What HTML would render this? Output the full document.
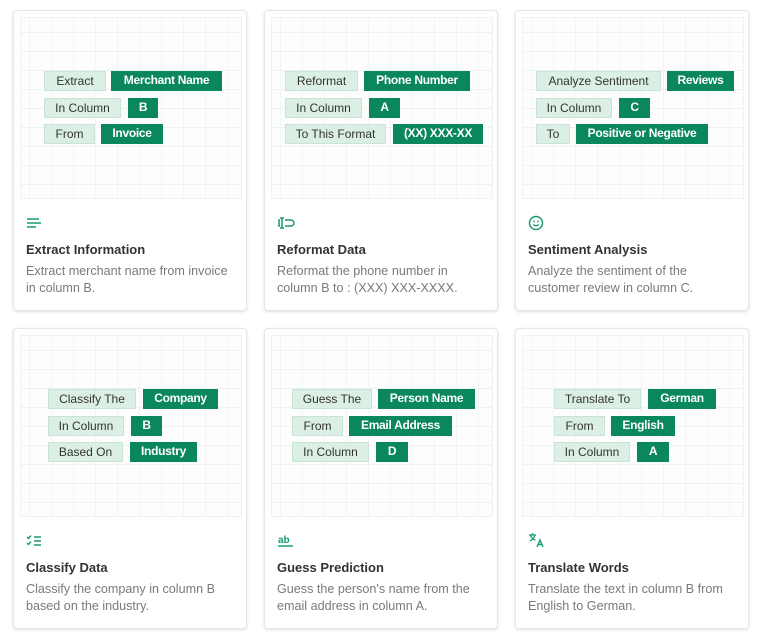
<!DOCTYPE html>
<html><head><meta charset="utf-8"><style>
*{box-sizing:border-box;margin:0;padding:0}
body{width:768px;height:644px;background:#fff;font-family:"Liberation Sans",sans-serif;position:relative;overflow:hidden}
.card{position:absolute;width:234px;height:301px;border:1px solid #e6e6e6;border-radius:4px;background:#fff;box-shadow:0 1px 3px rgba(0,0,0,.12)}
.grid{position:absolute;left:6px;top:6px;width:222px;height:182px;border:1px solid #edf3ef;
background-color:#fcfdfc;
background-image:linear-gradient(#edf4ef 1px,transparent 1px),linear-gradient(90deg,#f1f6f2 1px,transparent 1px);
background-size:22px 19px,22px 19px;background-position:0 14px,8px 0}
.t{position:absolute;height:20px;line-height:19px;font-size:12px;text-align:center;white-space:nowrap}
.l{background:#dcefe5;border:1px solid #c9e3d6;color:#333}
.g{background:#0b875c;color:#fff;font-weight:bold;letter-spacing:-.3px}
.ic{position:absolute;left:12px;top:204px}
.h{position:absolute;left:12px;top:231px;font-size:13px;font-weight:bold;color:#333}
.d{position:absolute;left:12px;top:252px;font-size:12.6px;line-height:17px;color:#7a7a7a;width:212px}
</style></head><body>

<div class="card" style="left:13px;top:10px"><div class="grid"></div>
<div class="t l" style="left:30px;top:60px;width:62px">Extract</div>
<div class="t g" style="left:97px;top:60px;width:111px">Merchant Name</div>
<div class="t l" style="left:30px;top:87px;width:77px">In Column</div>
<div class="t g" style="left:114px;top:87px;width:30px">B</div>
<div class="t l" style="left:30px;top:113px;width:51px">From</div>
<div class="t g" style="left:87px;top:113px;width:62px">Invoice</div>
<svg class="ic" width="16" height="16" viewBox="0 0 16 16"><path d="M1 4h12M1 8h14M1 12h9" stroke="#1a9a70" stroke-width="1.5" fill="none"/></svg>
<div class="h">Extract Information</div>
<div class="d">Extract merchant name from invoice in column B.</div></div>

<div class="card" style="left:264px;top:10px"><div class="grid"></div>
<div class="t l" style="left:20px;top:60px;width:73px">Reformat</div>
<div class="t g" style="left:99px;top:60px;width:106px">Phone Number</div>
<div class="t l" style="left:20px;top:87px;width:77px">In Column</div>
<div class="t g" style="left:104px;top:87px;width:31px">A</div>
<div class="t l" style="left:20px;top:113px;width:101px">To This Format</div>
<div class="t g" style="left:128px;top:113px;width:90px">(XX) XXX-XX</div>
<svg class="ic" width="18" height="16" viewBox="0 0 18 16"><path d="M3 3h4M3 13h4M5 3v10M8 5h6a3 3 0 0 1 0 6H8M3 5H2v6h1" stroke="#1a9a70" stroke-width="1.5" fill="none"/></svg>
<div class="h">Reformat Data</div>
<div class="d">Reformat the phone number in column B to : (XXX) XXX-XXXX.</div></div>

<div class="card" style="left:515px;top:10px"><div class="grid"></div>
<div class="t l" style="left:20px;top:60px;width:125px">Analyze Sentiment</div>
<div class="t g" style="left:151px;top:60px;width:67px">Reviews</div>
<div class="t l" style="left:20px;top:87px;width:76px">In Column</div>
<div class="t g" style="left:103px;top:87px;width:31px">C</div>
<div class="t l" style="left:20px;top:113px;width:34px">To</div>
<div class="t g" style="left:60px;top:113px;width:132px">Positive or Negative</div>
<svg class="ic" width="16" height="16" viewBox="0 0 16 16"><circle cx="8" cy="8" r="6.5" stroke="#1a9a70" stroke-width="1.5" fill="none"/><circle cx="6" cy="6.5" r=".9" fill="#1a9a70"/><circle cx="10" cy="6.5" r=".9" fill="#1a9a70"/><path d="M5.3 9.5q2.7 2.5 5.4 0" stroke="#1a9a70" stroke-width="1.3" fill="none"/></svg>
<div class="h">Sentiment Analysis</div>
<div class="d">Analyze the sentiment of the customer review in column C.</div></div>

<div class="card" style="left:13px;top:328px"><div class="grid"></div>
<div class="t l" style="left:34px;top:60px;width:88px">Classify The</div>
<div class="t g" style="left:129px;top:60px;width:75px">Company</div>
<div class="t l" style="left:34px;top:87px;width:76px">In Column</div>
<div class="t g" style="left:117px;top:87px;width:31px">B</div>
<div class="t l" style="left:34px;top:113px;width:75px">Based On</div>
<div class="t g" style="left:116px;top:113px;width:67px">Industry</div>
<svg class="ic" width="16" height="16" viewBox="0 0 16 16"><path d="M1 4l1.5 1.5L5 2.5M1 10l1.5 1.5L5 8.5M8 4h7M8 8h7M8 12h7" stroke="#1a9a70" stroke-width="1.4" fill="none"/></svg>
<div class="h">Classify Data</div>
<div class="d">Classify the company in column B based on the industry.</div></div>

<div class="card" style="left:264px;top:328px"><div class="grid"></div>
<div class="t l" style="left:27px;top:60px;width:80px">Guess The</div>
<div class="t g" style="left:113px;top:60px;width:97px">Person Name</div>
<div class="t l" style="left:27px;top:87px;width:51px">From</div>
<div class="t g" style="left:84px;top:87px;width:103px">Email Address</div>
<div class="t l" style="left:27px;top:113px;width:77px">In Column</div>
<div class="t g" style="left:111px;top:113px;width:32px">D</div>
<svg class="ic" width="18" height="16" viewBox="0 0 18 16"><text x="1" y="10" font-size="10" font-weight="bold" fill="#1a9a70" font-family="Liberation Sans">ab</text><path d="M1 13h15" stroke="#1a9a70" stroke-width="1.5"/></svg>
<div class="h">Guess Prediction</div>
<div class="d">Guess the person's name from the email address in column A.</div></div>

<div class="card" style="left:515px;top:328px"><div class="grid"></div>
<div class="t l" style="left:38px;top:60px;width:87px">Translate To</div>
<div class="t g" style="left:132px;top:60px;width:68px">German</div>
<div class="t l" style="left:38px;top:87px;width:51px">From</div>
<div class="t g" style="left:95px;top:87px;width:64px">English</div>
<div class="t l" style="left:38px;top:113px;width:76px">In Column</div>
<div class="t g" style="left:121px;top:113px;width:32px">A</div>
<svg class="ic" width="18" height="18" viewBox="0 0 18 18" style="top:202px"><path d="M1 4h7M4.5 2v2M2.5 4q1 4 5 5M7 4q-1 4-5 6" stroke="#1a9a70" stroke-width="1.3" fill="none"/><path d="M9 16l3-7 3 7M10.2 13.5h3.6" stroke="#1a9a70" stroke-width="1.4" fill="none"/></svg>
<div class="h">Translate Words</div>
<div class="d">Translate the text in column B from English to German.</div></div>

</body></html>
